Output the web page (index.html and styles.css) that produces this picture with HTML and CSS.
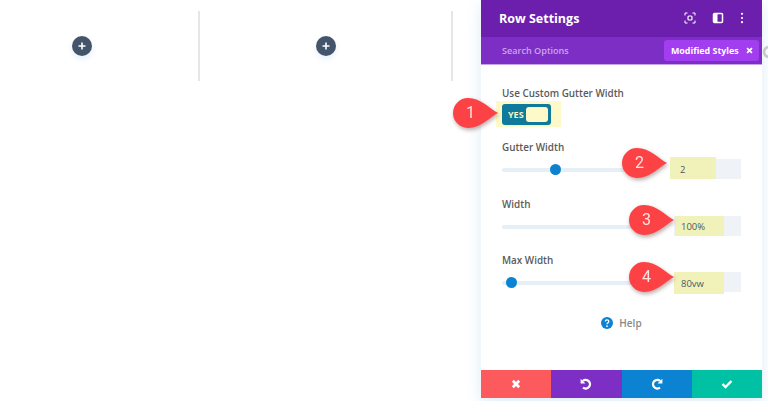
FILE: index.html
```html
<!DOCTYPE html>
<html lang="en">
<head>
<meta charset="utf-8">
<title>Row Settings</title>
<link rel="stylesheet" href="styles.css">
</head>
<body>
<div class="page">
  <main class="canvas">
    <div class="col col-first"><span class="add"><svg viewBox="0 0 20 20" width="20" height="20"><path d="M10 6.500v7M6.500 10h7" stroke="#fff" stroke-width="1.600" fill="none"/></svg></span></div>
    <div class="col col-second"><span class="add"><svg viewBox="0 0 20 20" width="20" height="20"><path d="M10 6.500v7M6.500 10h7" stroke="#fff" stroke-width="1.600" fill="none"/></svg></span></div>
  </main>
  <aside class="panel">
    <header class="head">
      <h1 class="title">Row Settings</h1>
      <div class="head-icons">
        <svg viewBox="0 0 12 12" width="12" height="12"><path d="M1 3.500V1h2.500M8.500 1H11v2.500M11 8.500V11H8.500M3.500 11H1V8.500" stroke="#fff" stroke-width="1" fill="none"/><rect x="4" y="4" width="4" height="4" rx="1" fill="none" stroke="#fff" stroke-width="1.200"/></svg>
        <svg viewBox="0 0 12 12" width="12" height="12"><rect x="1.500" y="1.500" width="9" height="9" rx="1" fill="none" stroke="#fff" stroke-width="1.500"/><rect x="2" y="2" width="3.500" height="8" fill="#fff"/></svg>
        <svg viewBox="0 0 4 12" width="4" height="12"><circle cx="2" cy="1.800" r="1.100" fill="#fff"/><circle cx="2" cy="6" r="1.100" fill="#fff"/><circle cx="2" cy="10.200" r="1.100" fill="#fff"/></svg>
      </div>
    </header>
    <div class="search">
      <span class="search-label">Search Options</span>
      <span class="badge">Modified Styles <svg viewBox="0 0 8 8" width="7" height="7"><path d="M1.200 1.200l5.600 5.600M6.800 1.200L1.200 6.800" stroke="#fff" stroke-width="2" fill="none"/></svg></span>
    </div>
    <div class="body">
      <section class="field field-toggle">
        <label class="label">Use Custom Gutter Width</label>
        <div class="toggle-wrap"><div class="toggle"><span class="yes">YES</span><span class="knob"></span></div></div>
      </section>
      <section class="field field-gutter">
        <label class="label">Gutter Width</label>
        <div class="control">
          <div class="track"><span class="thumb thumb-gutter"></span></div>
          <div class="input"><span class="value value-gutter">2</span></div>
        </div>
      </section>
      <section class="field field-width">
        <label class="label">Width</label>
        <div class="control">
          <div class="track"></div>
          <div class="input"><span class="value value-width">100%</span></div>
        </div>
      </section>
      <section class="field field-max">
        <label class="label">Max Width</label>
        <div class="control">
          <div class="track"><span class="thumb thumb-max"></span></div>
          <div class="input"><span class="value value-max">80vw</span></div>
        </div>
      </section>
      <a class="help"><svg viewBox="0 0 12 12" width="12" height="12"><circle cx="6" cy="6" r="6" fill="#0c82d2"/><path d="M4.300 4.600c0-2.200 3.500-2.200 3.500-.2 0 1.300-1.800 1.300-1.800 2.800" stroke="#fff" stroke-width="1.300" fill="none"/><circle cx="6" cy="9.200" r=".85" fill="#fff"/></svg>Help</a>
    </div>
    <footer class="foot">
      <span class="btn btn-red"><svg viewBox="0 0 10 10" width="10" height="10"><path d="M1.800 1.800l6.400 6.400M8.200 1.800L1.800 8.200" stroke="#fff" stroke-width="2.800" fill="none"/></svg></span>
      <span class="btn btn-purple"><svg viewBox="0 0 12 12" width="12" height="12"><path d="M2.800 3A4.300 4.300 0 1 1 3 9.600" stroke="#fff" stroke-width="2.300" fill="none"/><path d="M.6 .8v4.800H5.400z" fill="#fff"/></svg></span>
      <span class="btn btn-blue"><svg viewBox="0 0 12 12" width="12" height="12"><path d="M9.200 3A4.300 4.300 0 1 0 9 9.600" stroke="#fff" stroke-width="2.300" fill="none"/><path d="M11.400 .8v4.800H6.600z" fill="#fff"/></svg></span>
      <span class="btn btn-green"><svg viewBox="0 0 12 10" width="12" height="10"><path d="M1.500 5l3 3 6-6" stroke="#fff" stroke-width="2.400" fill="none"/></svg></span>
    </footer>
  </aside>
  <div class="edge"></div>
  <svg class="cut-icon" viewBox="0 0 6 14" width="6" height="14"><circle cx="7" cy="7" r="5" fill="none" stroke="#c9c9c9" stroke-width="2.600"/></svg>
  <div class="pin pin-1"><svg viewBox="0 0 50 36" width="50" height="36"><path d="M46 17C38 13 29 2 16 2A15 15 0 0 0 16 32C29 32 38 21 46 17Z" fill="#fc4245"/></svg><span class="pin-num">1</span></div>
  <div class="pin pin-2"><svg viewBox="0 0 50 36" width="50" height="36"><path d="M46 17C38 13 29 2 16 2A15 15 0 0 0 16 32C29 32 38 21 46 17Z" fill="#fc4245"/></svg><span class="pin-num">2</span></div>
  <div class="pin pin-3"><svg viewBox="0 0 50 36" width="50" height="36"><path d="M46 17C38 13 29 2 16 2A15 15 0 0 0 16 32C29 32 38 21 46 17Z" fill="#fc4245"/></svg><span class="pin-num">3</span></div>
  <div class="pin pin-4"><svg viewBox="0 0 50 36" width="50" height="36"><path d="M46 17C38 13 29 2 16 2A15 15 0 0 0 16 32C29 32 38 21 46 17Z" fill="#fc4245"/></svg><span class="pin-num">4</span></div>
</div>
</body>
</html>
```
FILE: styles.css
```css
* { box-sizing: border-box; }
html, body { margin: 0; padding: 0; background: #fff; overflow: hidden; }
body { font-family: "Open Sans", sans-serif; }
.page { position: relative; display: flex; width: 768px; height: 401px; overflow: hidden; }

.canvas { display: flex; width: 481px; height: 81px; margin-top: 11px; flex: none; }
.col { height: 70px; border-right: 2px solid #e6e6e6; display: flex; align-items: center; justify-content: center; }
.col-first { width: 200px; padding-right: 34px; }
.col-second { width: 253px; }
.add { width: 20px; height: 20px; border-radius: 50%; background: #44546a; display: block; box-shadow: 0 3px 6px rgba(43, 135, 218, .12); }
.add svg { display: block; }

.panel { width: 281px; height: 398px; flex: none; display: flex; flex-direction: column; background: #fff; box-shadow: 0 5px 14px rgba(43, 135, 218, .16); }
.head { height: 37px; flex: none; background: #6c1fad; display: flex; align-items: center; justify-content: space-between; padding: 0 18px 1px 18px; }
.title { margin: 0; color: #fff; font-size: 12.500px; font-weight: 700; }
.head-icons { display: flex; align-items: center; gap: 16px; }
.head-icons svg { display: block; }
.search { height: 28px; flex: none; background: #7d2fc5; display: flex; align-items: center; justify-content: space-between; padding: 0 3px 0 21px; border-bottom: 1px solid #c8a4e6; }
.search-label { color: #c9a6ea; font-size: 9.100px; font-weight: 600; }
.badge { width: 95px; height: 21px; border-radius: 3px; background: #a33df0; color: #fff; font-size: 8.900px; font-weight: 700; display: flex; align-items: center; justify-content: space-between; padding: 0 6px 0 7px; }
.badge svg { display: block; }

.body { flex: 1; padding: 0 21px; position: relative; }
.field { display: flex; flex-direction: column; }
.label { color: #5a5a5a; font-size: 9.900px; font-weight: 600; line-height: 14px; }
.field-toggle { padding-top: 21px; }
.field-gutter { padding-top: 13px; }
.field-width { padding-top: 16px; }
.field-max { padding-top: 15px; }
.toggle-wrap { width: 65px; height: 26px; margin: 1px 0 0 -6px; background: #fdf9c8; padding: 3px 0 0 6px; }
.toggle { width: 49px; height: 21px; border-radius: 3px; background: #0f7a9c; display: flex; align-items: center; justify-content: space-between; padding: 0 3px 0 6px; }
.yes { color: #fbf6c4; font-size: 9px; font-weight: 700; }
.knob { width: 22px; height: 15px; border-radius: 3px; background: #fdf9c8; }
.control { display: flex; align-items: center; justify-content: space-between; height: 22px; margin-top: 5px; }
.track { width: 130px; height: 4px; border-radius: 2px; background: #e6eef6; position: relative; }
.thumb { position: absolute; top: -4px; width: 11px; height: 11px; border-radius: 50%; background: #0c82d2; }
.thumb-gutter { left: 48px; }
.thumb-max { left: 4px; }
.input { width: 67px; height: 20px; align-self: flex-start; background: #eff3f8; display: flex; }
.value { display: flex; align-items: center; flex: none; background: #f1f2b9; color: #4c5866; font-size: 9.500px; font-weight: 500; }
.value-gutter { width: 46px; height: 22px; margin: -2px 0 0 -4px; padding: 3px 0 0 10px; }
.value-width { width: 49px; height: 20px; margin-left: 1px; padding-left: 6px; }
.value-max { width: 50px; height: 22px; padding-left: 7px; }
.help { display: flex; align-items: center; justify-content: center; gap: 6px; margin-top: 22px; color: #888; font-size: 10px; font-weight: 600; line-height: 14px; }
.help svg { display: block; }

.foot { height: 28px; flex: none; display: grid; grid-template-columns: repeat(4, 1fr); }
.btn { display: flex; align-items: center; justify-content: center; }
.btn svg { display: block; }
.btn-red { background: #fd5a5e; }
.btn-purple { background: #7d2fc5; }
.btn-blue { background: #0c82d2; }
.btn-green { background: #00c1a4; }

.edge { width: 6px; flex: none; }
.cut-icon { position: absolute; left: 762px; top: 45px; display: block; }

.pin { position: absolute; width: 50px; height: 36px; filter: drop-shadow(1px 2px 2px rgba(80, 30, 30, .4)); }
.pin svg { display: block; }
.pin-num { position: absolute; left: 0; top: 0; width: 37px; height: 32px; display: flex; align-items: center; justify-content: center; color: #fbe5e5; font-family: "Roboto", sans-serif; font-size: 16px; }
.pin-1 { left: 452px; top: 96px; }
.pin-2 { left: 621px; top: 146px; }
.pin-3 { left: 628px; top: 203px; }
.pin-4 { left: 628px; top: 260px; }
```
